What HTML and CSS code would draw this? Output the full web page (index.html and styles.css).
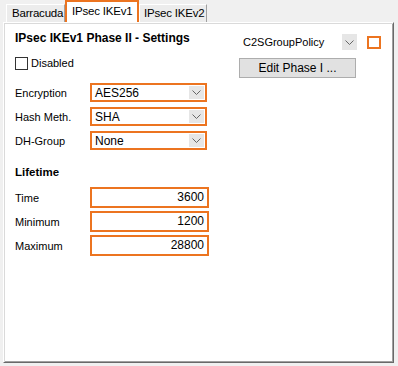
FILE: index.html
```html
<!DOCTYPE html>
<html>
<head>
<meta charset="utf-8">
<link rel="stylesheet" href="styles.css">
</head>
<body>
<div class="window">
  <div class="tabs">
    <div class="tab tab-first">Barracuda</div>
    <div class="tab tab-active">IPsec IKEv1</div>
    <div class="tab tab-last">IPsec IKEv2</div>
  </div>
  <div class="panel">
    <div class="col-left">
      <div class="title">IPsec IKEv1 Phase II - Settings</div>
      <div class="check-row"><span class="checkbox"></span><span class="check-label">Disabled</span></div>
      <div class="rows rows-select">
        <div class="row"><span class="label">Encryption</span><div class="combo hl"><span class="combo-text">AES256</span><span class="arrow"><svg width="9" height="5" viewBox="0 0 9 5"><path d="M0.5 0.5 L4.5 4.5 L8.5 0.5" fill="none" stroke="#666" stroke-width="1"/></svg></span></div></div>
        <div class="row"><span class="label">Hash Meth.</span><div class="combo hl"><span class="combo-text">SHA</span><span class="arrow"><svg width="9" height="5" viewBox="0 0 9 5"><path d="M0.5 0.5 L4.5 4.5 L8.5 0.5" fill="none" stroke="#666" stroke-width="1"/></svg></span></div></div>
        <div class="row"><span class="label">DH-Group</span><div class="combo hl"><span class="combo-text">None</span><span class="arrow"><svg width="9" height="5" viewBox="0 0 9 5"><path d="M0.5 0.5 L4.5 4.5 L8.5 0.5" fill="none" stroke="#666" stroke-width="1"/></svg></span></div></div>
      </div>
      <div class="subtitle">Lifetime</div>
      <div class="rows rows-input">
        <div class="row"><span class="label">Time</span><div class="field hl">3600</div></div>
        <div class="row"><span class="label">Minimum</span><div class="field hl">1200</div></div>
        <div class="row"><span class="label">Maximum</span><div class="field hl">28800</div></div>
      </div>
    </div>
    <div class="col-right">
      <div class="policy-row">
        <div class="combo policy"><span class="combo-text">C2SGroupPolicy</span><span class="arrow"><svg width="9" height="5" viewBox="0 0 9 5"><path d="M0.5 0.5 L4.5 4.5 L8.5 0.5" fill="none" stroke="#666" stroke-width="1"/></svg></span></div>
        <span class="marker"></span>
      </div>
      <div class="button">Edit Phase I ...</div>
    </div>
  </div>
</div>
</body>
</html>
```

FILE: styles.css
```css
html, body {
  margin: 0;
  padding: 0;
  background: #f0f0f0;
}
.window {
  width: 398px;
  height: 366px;
  font-family: "Liberation Sans", Arial, sans-serif;
  font-size: 11px;
  color: #000;
  display: flex;
  flex-direction: column;
}
.tabs {
  height: 22px;
  display: flex;
  align-items: flex-end;
  padding-left: 6px;
}
.tab {
  white-space: nowrap;
  height: 18px;
  line-height: 17px;
  padding: 0 0 0 5px;
  background: #ececec;
  border-top: 1px solid #fff;
  border-left: 1px solid #fff;
  border-right: 1px solid #a0a0a0;
  box-sizing: border-box;
  font-size: 11.5px;
  letter-spacing: -0.2px;
}
.tab-first { width: 59px; }
.tab-active {
  width: 74px;
  height: 22px;
  line-height: 19px;
  background: #fff;
  border: 2px solid #ec7420;
  border-bottom: none;
  padding: 0 0 0 5px;
}
.tab-last { width: 68px; padding-left: 4px; }
.panel {
  width: 391px;
  height: 341px;
  margin-left: 3px;
  box-sizing: border-box;
  background: #fff;
  border-top: 1px solid #fff;
  border-left: 1px solid #fff;
  border-right: 1px solid #696969;
  border-bottom: 1px solid #696969;
  box-shadow: inset 1px 1px 0 #dadada, inset -1px -1px 0 #a0a0a0;
  display: flex;
}
.col-left {
  width: 210px;
  padding-left: 11px;
  padding-top: 7px;
  box-sizing: border-box;
}
.title {
  font-weight: bold;
  font-size: 12px;
  line-height: 16px;
}
.check-row {
  margin-top: 11px;
  display: flex;
  align-items: center;
  height: 13px;
}
.checkbox {
  width: 13px;
  height: 13px;
  box-sizing: border-box;
  border: 1px solid #333;
  background: #fff;
}
.check-label {
  margin-left: 3px;
  line-height: 13px;
}
.rows {
  display: flex;
  flex-direction: column;
}
.rows-select {
  margin-top: 13px;
  gap: 5px;
}
.rows-input {
  margin-top: 7px;
  gap: 3px;
}
.row {
  display: flex;
  align-items: center;
}
.label {
  width: 75px;
}
.combo {
  display: flex;
  align-items: center;
  height: 19px;
  width: 117px;
  box-sizing: border-box;
  background: #fff;
  font-size: 12px;
}
.hl {
  border: 2px solid #ec7420;
}
.combo-text {
  flex: 1;
  padding-left: 3px;
  white-space: nowrap;
}
.arrow {
  width: 15px;
  align-self: stretch;
  background: #e6e6e6;
  display: flex;
  align-items: center;
  justify-content: center;
  margin: 1px 1px 1px 0;
}
.field {
  width: 119px;
  height: 21px;
  box-sizing: border-box;
  text-align: right;
  line-height: 17px;
  padding-right: 3px;
  background: #fff;
  font-size: 12px;
}
.subtitle {
  margin-top: 14px;
  font-weight: bold;
  font-size: 11.5px;
  line-height: 16px;
}
.col-right {
  padding-left: 25px;
  padding-top: 9px;
}
.policy-row {
  display: flex;
  align-items: center;
}
.policy {
  width: 120px;
  height: 20px;
  border: 1px solid #fff;
  background: #fff;
  font-size: 11px;
}
.marker {
  width: 14px;
  height: 13px;
  box-sizing: border-box;
  border: 2px solid #ec7420;
  margin-left: 8px;
}
.button {
  margin-top: 6px;
  width: 117px;
  height: 20px;
  box-sizing: border-box;
  border: 1px solid #adadad;
  background: #e1e1e1;
  text-align: center;
  line-height: 18px;
  font-size: 12px;
}
```
